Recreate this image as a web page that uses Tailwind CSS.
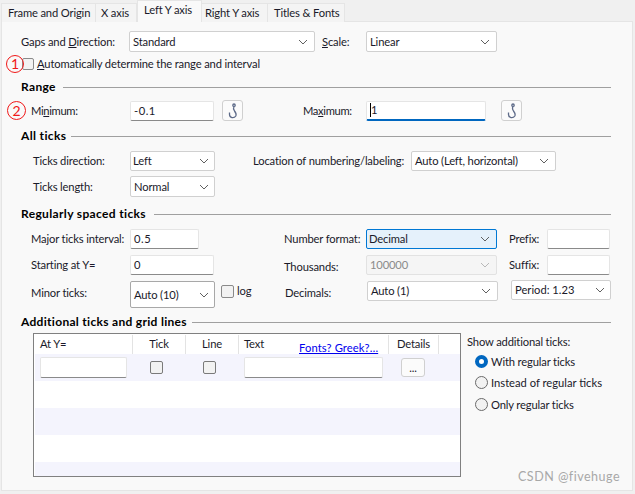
<!DOCTYPE html>
<html><head><meta charset="utf-8">
<script src="https://cdn.jsdelivr.net/npm/@tailwindcss/browser@4"></script>
</head>
<body class="m-0 bg-[#f0f0f0]">
<div class="relative w-[635px] h-[494px] overflow-hidden bg-[#f0f0f0] text-[#1a1a2a] text-[11.2px] tracking-[-0.15px] leading-[16px] whitespace-nowrap font-['Lato','Open_Sans',sans-serif]">
  <!-- tabs -->
  <div class="flex h-[22px] pl-[1px] items-end relative z-10">
    <div class="w-[95px] h-[19px] pl-[6px] border border-b-0 border-[#e5e5e5] bg-[#f4f4f4] flex items-center">Frame and Origin</div>
    <div class="w-[41px] h-[19px] pl-[5px] border border-b-0 border-l-0 border-[#e5e5e5] bg-[#f4f4f4] flex items-center">X axis</div>
    <div class="w-[65px] h-[22px] pl-[6px] pb-[3px] border border-b-0 border-[#e5e5e5] bg-[#f9f9f9] flex items-center">Left Y axis</div>
    <div class="w-[66px] h-[19px] pl-[3px] border border-b-0 border-l-0 border-[#e5e5e5] bg-[#f4f4f4] flex items-center">Right Y axis</div>
    <div class="w-[77px] h-[19px] pl-[6px] border border-b-0 border-l-0 border-[#e5e5e5] bg-[#f4f4f4] flex items-center">Titles &amp; Fonts</div>
  </div>
  <!-- panel -->
  <div class="relative -mt-[1px] ml-[1px] w-[632px] h-[470px] border border-[#e5e5e5] bg-[#f9f9f9]">
    <div class="flex flex-col pt-[9px] pl-[17px] pr-[21px]">

      <!-- row: gaps -->
      <div class="flex items-center h-[21px]">
        <span class="w-[110px] pl-[2px]"><span>Gaps and <u>D</u>irection:</span></span>
        <div class="flex items-center justify-between w-[186px] h-[21px] bg-white border border-[#d0d0d0] rounded-[2px] pl-[3px] pr-[6px]"><span>Standard</span><svg width="10" height="6" viewBox="0 0 10 6" fill="none" stroke="#606060"><path d="M1 1l4 4 4-4"/></svg></div>
        <span class="ml-[7px] w-[44px]"><u>S</u>cale:</span>
        <div class="flex items-center justify-between w-[131px] h-[21px] bg-white border border-[#d0d0d0] rounded-[2px] pl-[3px] pr-[6px]"><span>Linear</span><svg width="10" height="6" viewBox="0 0 10 6" fill="none" stroke="#606060"><path d="M1 1l4 4 4-4"/></svg></div>
      </div>

      <!-- row: auto -->
      <div class="flex items-center h-[14px] mt-[5px] pl-[3px]">
        <span class="w-[12px] h-[12px] rounded-[2px] border border-[#8a8a8a] bg-[#f2f2f2]"></span>
        <span class="ml-[3px]"><u>A</u>utomatically determine the range and interval</span>
      </div>

      <!-- Range -->
      <div class="flex items-center h-[16px] mt-[8px] font-bold text-black text-[12px] tracking-[0.35px]">
        <span class="pl-[2px] w-[44px]">Range</span><span class="w-[548px] h-px bg-[#a0a0a0]"></span>
      </div>

      <!-- row: min/max -->
      <div class="flex items-center h-[21px] mt-[5px]">
        <span class="w-[111px] pl-[12px] tracking-[-0.35px]">Mi<u>n</u>imum:</span>
        <div class="w-[84px] h-[20px] bg-white border border-[#e5e5e5] border-b-[#8a8a8a] rounded-[2px] pl-[3px] flex items-center tracking-[0.5px]">-0.1</div>
        <div class="ml-[8px] w-[21px] h-[21px] rounded-[3px] border border-[#d0d0d0] bg-[#fbfbfb] flex items-center justify-center">
          <svg width="12" height="16" viewBox="0 0 12 16" fill="none" stroke="#5d6a88" stroke-width="1.3"><circle cx="7" cy="2.2" r="1.2"/><path d="M7 3.5 Q5.8 5.5 7.5 8 Q9.8 11 8.8 13 Q7.5 15 5 14.6 Q2.5 14 2.5 11.5 L2.5 9.5"/></svg>
        </div>
        <span class="ml-[60px] w-[63px] tracking-[-0.35px]">Ma<u>x</u>imum:</span>
        <div class="relative w-[120px] h-[20px] bg-white border border-[#e5e5e5] border-b-2 border-b-[#0067c0] rounded-[2px] pl-[3px] flex items-center"><span class="w-px h-[14px] bg-black"></span>1</div>
        <div class="ml-[15px] w-[21px] h-[21px] rounded-[3px] border border-[#d0d0d0] bg-[#fbfbfb] flex items-center justify-center">
          <svg width="12" height="16" viewBox="0 0 12 16" fill="none" stroke="#5d6a88" stroke-width="1.3"><circle cx="7" cy="2.2" r="1.2"/><path d="M7 3.5 Q5.8 5.5 7.5 8 Q9.8 11 8.8 13 Q7.5 15 5 14.6 Q2.5 14 2.5 11.5 L2.5 9.5"/></svg>
        </div>
      </div>

      <!-- All ticks -->
      <div class="flex items-center h-[16px] mt-[7px] font-bold text-black text-[12px] tracking-[0.35px]">
        <span class="pl-[2px] w-[52px]">All ticks</span><span class="w-[540px] h-px bg-[#a0a0a0]"></span>
      </div>

      <div class="flex items-center h-[20px] mt-[7px]">
        <span class="w-[111px] pl-[14px]">Ticks direction:</span>
        <div class="flex items-center justify-between w-[85px] h-[20px] bg-white border border-[#d0d0d0] rounded-[2px] pl-[2px] pr-[5px]"><span>Left</span><svg width="10" height="6" viewBox="0 0 10 6" fill="none" stroke="#606060"><path d="M1 1l4 4 4-4"/></svg></div>
        <span class="ml-[38px] w-[158px]">Location of numbering/labeling:</span>
        <div class="flex items-center justify-between w-[145px] h-[20px] bg-white border border-[#d0d0d0] rounded-[2px] pl-[3px] pr-[6px]"><span>Auto (Left, horizontal)</span><svg width="10" height="6" viewBox="0 0 10 6" fill="none" stroke="#606060"><path d="M1 1l4 4 4-4"/></svg></div>
      </div>

      <div class="flex items-center h-[21px] mt-[5px]">
        <span class="w-[111px] pl-[14px]">Ticks length:</span>
        <div class="flex items-center justify-between w-[85px] h-[21px] bg-white border border-[#d0d0d0] rounded-[2px] pl-[3px] pr-[5px]"><span>Normal</span><svg width="10" height="6" viewBox="0 0 10 6" fill="none" stroke="#606060"><path d="M1 1l4 4 4-4"/></svg></div>
      </div>

      <!-- Regularly -->
      <div class="flex items-center h-[16px] mt-[9px] font-bold text-black text-[12px] tracking-[0.35px]">
        <span class="pl-[2px] w-[135px]">Regularly spaced ticks</span><span class="w-[457px] h-px bg-[#a0a0a0]"></span>
      </div>

      <div class="flex items-center h-[20px] mt-[7px]">
        <span class="w-[111px] pl-[12px]">Major ticks interval:</span>
        <div class="w-[69px] h-[20px] bg-white border border-[#e5e5e5] border-b-[#8a8a8a] rounded-[2px] pl-[3px] flex items-center tracking-[0.5px]">0.5</div>
        <span class="ml-[85px] w-[82px]">Number format:</span>
        <div class="flex items-center justify-between w-[131px] h-[20px] bg-[#e5f1fb] border border-[#0078d4] rounded-[2px] pl-[2px] pr-[6px]"><span>Decimal</span><svg width="10" height="6" viewBox="0 0 10 6" fill="none" stroke="#606060"><path d="M1 1l4 4 4-4"/></svg></div>
        <span class="ml-[12px] w-[38px]">Prefix:</span>
        <div class="w-[63px] h-[20px] bg-white border border-[#e5e5e5] border-b-[#8a8a8a] rounded-[2px]"></div>
      </div>

      <div class="flex items-center h-[20px] mt-[6px]">
        <span class="w-[111px] pl-[12px]">Starting at Y=</span>
        <div class="w-[84px] h-[20px] bg-white border border-[#e5e5e5] border-b-[#8a8a8a] rounded-[2px] pl-[3px] flex items-center">0</div>
        <span class="ml-[70px] w-[82px] translate-y-[2px]">Thousands:</span>
        <div class="flex items-center justify-between w-[131px] h-[20px] bg-[#f5f5f5] border border-[#e2e2e2] rounded-[2px] pl-[3px] pr-[6px] text-[#8a8a8a]"><span>100000</span><svg width="10" height="6" viewBox="0 0 10 6" fill="none" stroke="#b8b8b8"><path d="M1 1l4 4 4-4"/></svg></div>
        <span class="ml-[12px] w-[38px]">Suffix:</span>
        <div class="w-[63px] h-[20px] bg-white border border-[#e5e5e5] border-b-[#8a8a8a] rounded-[2px]"></div>
      </div>

      <div class="flex items-start h-[27px] mt-[6px]">
        <span class="w-[111px] pl-[12px] mt-[4px]">Minor ticks:</span>
        <div class="flex items-center justify-between w-[85px] h-[27px] bg-white border border-[#a8a8a8] rounded-[2px] pl-[3px] pr-[5px]"><span>Auto (10)</span><svg width="10" height="6" viewBox="0 0 10 6" fill="none" stroke="#606060"><path d="M1 1l4 4 4-4"/></svg></div>
        <span class="ml-[6px] mt-[4px] w-[13px] h-[13px] rounded-[2px] border border-[#8a8a8a] bg-[#f2f2f2]"></span>
        <span class="ml-[3px] mt-[2px] w-[48px]">log</span>
        <span class="w-[82px] mt-[4px]">Decimals:</span>
        <div class="flex items-center justify-between w-[131px] h-[20px] bg-white border border-[#d0d0d0] rounded-[2px] pl-[3px] pr-[6px]"><span>Auto (1)</span><svg width="10" height="6" viewBox="0 0 10 6" fill="none" stroke="#606060"><path d="M1 1l4 4 4-4"/></svg></div>
        <div class="ml-[13px] -mt-[1px] flex items-center justify-between w-[100px] h-[20px] bg-white border border-[#d0d0d0] rounded-[2px] pl-[3px] pr-[5px] tracking-[0px]"><span>Period: 1.23</span><svg width="10" height="6" viewBox="0 0 10 6" fill="none" stroke="#606060"><path d="M1 1l4 4 4-4"/></svg></div>
      </div>

      <!-- Additional -->
      <div class="flex items-center h-[16px] mt-[6px] font-bold text-black text-[12px] tracking-[0.3px]">
        <span class="pl-[2px] w-[173px]">Additional ticks and grid lines</span><span class="w-[419px] h-px bg-[#a0a0a0]"></span>
      </div>

      <div class="flex items-start mt-[3px] pl-[14px]">
        <!-- table -->
        <div class="w-[428px] h-[144px] border border-[#808080] bg-white overflow-hidden text-center">
          <div class="flex h-[20px] bg-white">
            <div class="w-[99px] h-[19px] mt-px pt-[1px] border-r border-[#e3e3e3] text-left pl-[6px]">At Y=</div>
            <div class="w-[53px] h-[19px] mt-px pt-[1px] border-r border-[#e3e3e3]">Tick</div>
            <div class="w-[53px] h-[19px] mt-px pt-[1px] border-r border-[#e3e3e3]">Line</div>
            <div class="relative w-[150px] h-[19px] mt-px pt-[1px] border-r border-[#e3e3e3] text-left pl-[5px]">Text<a class="absolute left-[60px] top-[5px] text-[#0000ee] underline whitespace-nowrap tracking-[0.1px]">Fonts? Greek?…</a></div>
            <div class="w-[50px] h-[19px] mt-px pt-[1px] border-r border-[#e3e3e3]">Details</div>
          </div>
          <div class="flex items-center h-[27px] bg-[#f4f4fd] ml-[1px]">
            <div class="w-[98px] flex justify-center pr-[2px]"><div class="w-[87px] h-[21px] bg-white border border-[#e5e5e5] border-b-[#8a8a8a] rounded-[2px]"></div></div>
            <div class="w-[53px] flex justify-center pr-[6px]"><span class="w-[13px] h-[13px] rounded-[2px] border border-[#7a7a7a] bg-[#f2f2f2]"></span></div>
            <div class="w-[53px] flex justify-center pr-[6px]"><span class="w-[13px] h-[13px] rounded-[2px] border border-[#7a7a7a] bg-[#f2f2f2]"></span></div>
            <div class="w-[150px] flex justify-center pr-[2px]"><div class="w-[139px] h-[21px] bg-white border border-[#e5e5e5] border-b-[#8a8a8a] rounded-[2px]"></div></div>
            <div class="w-[50px] flex justify-center pr-[2px]"><div class="w-[24px] h-[19px] bg-[#fbfbfb] border border-[#d0d0d0] rounded-[3px] flex items-center justify-center">...</div></div>
          </div>
          <div class="h-[27px] bg-white"></div>
          <div class="h-[27px] bg-[#f4f4fd] ml-[1px]"></div>
          <div class="h-[27px] bg-white"></div>
          <div class="h-[15px] bg-[#f4f4fd] ml-[1px]"></div>
        </div>
        <!-- radios -->
        <div class="ml-[5px] flex flex-col">
          <span class="mt-[1px] ml-[1px]">Show additional ticks:</span>
          <div class="flex items-center h-[21px] mt-[1px] pl-[9px]">
            <span class="w-[13px] h-[13px] rounded-full border-[4px] border-[#0067c0] bg-white"></span><span class="ml-[3px]">With regular ticks</span>
          </div>
          <div class="flex items-center h-[21px] mt-[0px] pl-[9px]">
            <span class="w-[13px] h-[13px] rounded-full border border-[#6a6a6a] bg-[#f2f2f2]"></span><span class="ml-[3px] tracking-[0px]">Instead of regular ticks</span>
          </div>
          <div class="flex items-center h-[21px] mt-[1px] pl-[9px]">
            <span class="w-[13px] h-[13px] rounded-full border border-[#6a6a6a] bg-[#f2f2f2]"></span><span class="ml-[3px]">Only regular ticks</span>
          </div>
        </div>
      </div>
    </div>
  </div>

  <!-- annotations -->
  <span class="absolute left-[6px] top-[55px] w-[18px] h-[18px] rounded-full border border-[#f01818] text-[#f01818] text-[14px] leading-[16px] text-center">1</span>
  <span class="absolute left-[7px] top-[101px] w-[19px] h-[19px] rounded-full border border-[#f01818] text-[#f01818] text-[14px] leading-[17px] text-center">2</span>
  <span class="absolute left-[518px] top-[469px] text-[#a8a8a8] text-[12.5px] tracking-[0.5px]">CSDN @fivehuge</span>
</div>
</body></html>
